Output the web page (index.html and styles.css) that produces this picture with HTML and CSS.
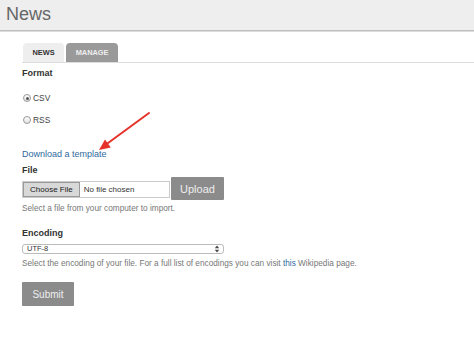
FILE: index.html
```html
<!DOCTYPE html>
<html lang="en">
<head>
    <meta charset="UTF-8">
    <meta name="viewport" content="width=device-width, initial-scale=1.0">
    <title>News - Import</title>
    <link rel="stylesheet" href="styles.css">
</head>
<body>
    <div class="header">News</div>

    <div class="tabs">
        <span class="tab active">News</span>
        <span class="tab">Manage</span>
    </div>

    <form class="content">
        <label class="label label-first">Format</label>

        <label class="radio-row radio-csv">
            <input type="radio" name="format" value="csv" checked>
            <span>CSV</span>
        </label>
        <label class="radio-row radio-rss">
            <input type="radio" name="format" value="rss">
            <span>RSS</span>
        </label>

        <a class="template-link" href="#">Download a template</a>

        <label class="label label-file" for="file">File</label>
        <div class="file-row">
            <input type="file" id="file" class="file-input">
            <button type="button" class="btn btn-upload">Upload</button>
        </div>
        <p class="help help-file">Select a file from your computer to import.</p>

        <label class="label label-encoding" for="encoding">Encoding</label>
        <div class="select-wrap">
            <select id="encoding" class="select">
                <option>UTF-8</option>
                <option>ISO-8859-1</option>
            </select>
            <svg class="select-arrows" width="6" height="8" viewBox="0 0 6 8">
                <path d="M3 0.5 L5.2 3.2 L0.8 3.2 Z" fill="#444"/>
                <path d="M3 7.5 L5.2 4.8 L0.8 4.8 Z" fill="#444"/>
            </svg>
        </div>
        <p class="help help-encoding">Select the encoding of your file. For a full list of encodings you can visit <a href="#">this</a> Wikipedia page.</p>

        <button type="submit" class="btn btn-submit">Submit</button>
    </form>

    <!-- annotation arrow pointing at the template link -->
    <svg class="annotation" width="474" height="346" viewBox="0 0 474 346">
        <line x1="149" y1="113" x2="106" y2="144.5" stroke="#e5332b" stroke-width="2" stroke-linecap="round"/>
        <polygon points="99,150 105,139.6 110.8,147.4" fill="#e5332b"/>
    </svg>
</body>
</html>
```

FILE: styles.css
```css
body {
    margin: 0;
    font-family: "Liberation Sans", Arial, sans-serif;
    color: #333;
    background: #fff;
    position: relative;
    min-height: 346px;
    overflow: hidden;
}
.header {
    height: 30px;
    line-height: 28px;
    padding-left: 6px;
    font-size: 18px;
    color: #666;
    background-color: #eee;
    border-bottom: 1px solid #bdbdbd;
    box-shadow: 0 1px 0 #ddd;
}
.tabs {
    display: flex;
    gap: 2px;
    margin: 12px 0 0 22px;
    padding-left: 1px;
    border-bottom: 1px solid #ddd;
}
.tab {
    height: 19px;
    line-height: 19px;
    padding: 0 9.5px;
    font-size: 7.4px;
    font-weight: bold;
    text-transform: uppercase;
    color: #eee;
    background-color: #9a9a9a;
    border-radius: 4px 4px 0 0;
}
.tab.active {
    color: #333;
    background-color: #eee;
}
.content {
    display: flex;
    flex-direction: column;
    align-items: flex-start;
    padding: 0 22px;
}
.label {
    display: block;
    font-size: 9px;
    font-weight: bold;
    line-height: 12px;
    color: #333;
}
.label-first {
    margin-top: 4px;
}
.label-file {
    margin-top: 4px;
}
.label-encoding {
    margin-top: 12px;
}
.radio-row {
    display: flex;
    align-items: center;
    gap: 2px;
    height: 12px;
    font-size: 8.4px;
    color: #444;
}
.radio-csv {
    margin-top: 13px;
}
.radio-rss {
    margin-top: 10px;
}
.radio-row input {
    appearance: none;
    -webkit-appearance: none;
    width: 8px;
    height: 8px;
    margin: 0 0 0 1px;
    border: 1px solid #999;
    border-radius: 50%;
    background: linear-gradient(#fff, #e2e2e2);
    box-sizing: border-box;
    position: relative;
}
.radio-row input:checked::after {
    content: "";
    position: absolute;
    left: 1.5px;
    top: 1.5px;
    width: 3px;
    height: 3px;
    border-radius: 50%;
    background: #555;
}
.template-link {
    margin-top: 22px;
    font-size: 9px;
    line-height: 12px;
    color: #2f6a9e;
    text-decoration: none;
}
.file-row {
    display: flex;
    align-items: center;
    margin-top: 1px;
    height: 23px;
}
.file-input {
    width: 148px;
    height: 17px;
    margin: 2px 1px 0 0;
    padding: 0;
    border: 1px solid #ccc;
    box-sizing: border-box;
    background: #fff;
    font-family: "Liberation Sans", Arial, sans-serif;
    font-size: 8px;
    color: #333;
}
.file-input::file-selector-button {
    height: 15px;
    margin: 0 4px 0 0;
    padding: 0 6px;
    border: 1px solid #999;
    border-radius: 0;
    background: #d8d8d8;
    font-family: "Liberation Sans", Arial, sans-serif;
    font-size: 8px;
    color: #222;
}
.btn {
    border: none;
    border-radius: 1px;
    background-color: #8b8b8b;
    color: #eee;
    font-family: "Liberation Sans", Arial, sans-serif;
    padding: 0;
    cursor: pointer;
}
.btn-upload {
    width: 53px;
    height: 23px;
    font-size: 11px;
}
.help {
    margin: 3px 0 0;
    font-size: 8.25px;
    line-height: 12px;
    color: #777;
}
.help a {
    color: #2f6a9e;
    text-decoration: none;
}
.help-encoding {
    margin-top: 4px;
}
.select-wrap {
    position: relative;
    margin-top: 5px;
    width: 202px;
    height: 10px;
}
.select {
    appearance: none;
    -webkit-appearance: none;
    display: block;
    width: 100%;
    height: 10px;
    margin: 0;
    padding: 0 0 0 4px;
    border: 1px solid #bbb;
    border-radius: 3px;
    box-sizing: border-box;
    background: #fff;
    font-family: "Liberation Sans", Arial, sans-serif;
    font-size: 7.5px;
    line-height: 8px;
    color: #333;
}
.select-arrows {
    position: absolute;
    right: 4px;
    top: 1px;
    pointer-events: none;
}
.btn-submit {
    margin-top: 12px;
    width: 52px;
    height: 24px;
    font-size: 10px;
}
.annotation {
    position: absolute;
    left: 0;
    top: 0;
    pointer-events: none;
}
```
